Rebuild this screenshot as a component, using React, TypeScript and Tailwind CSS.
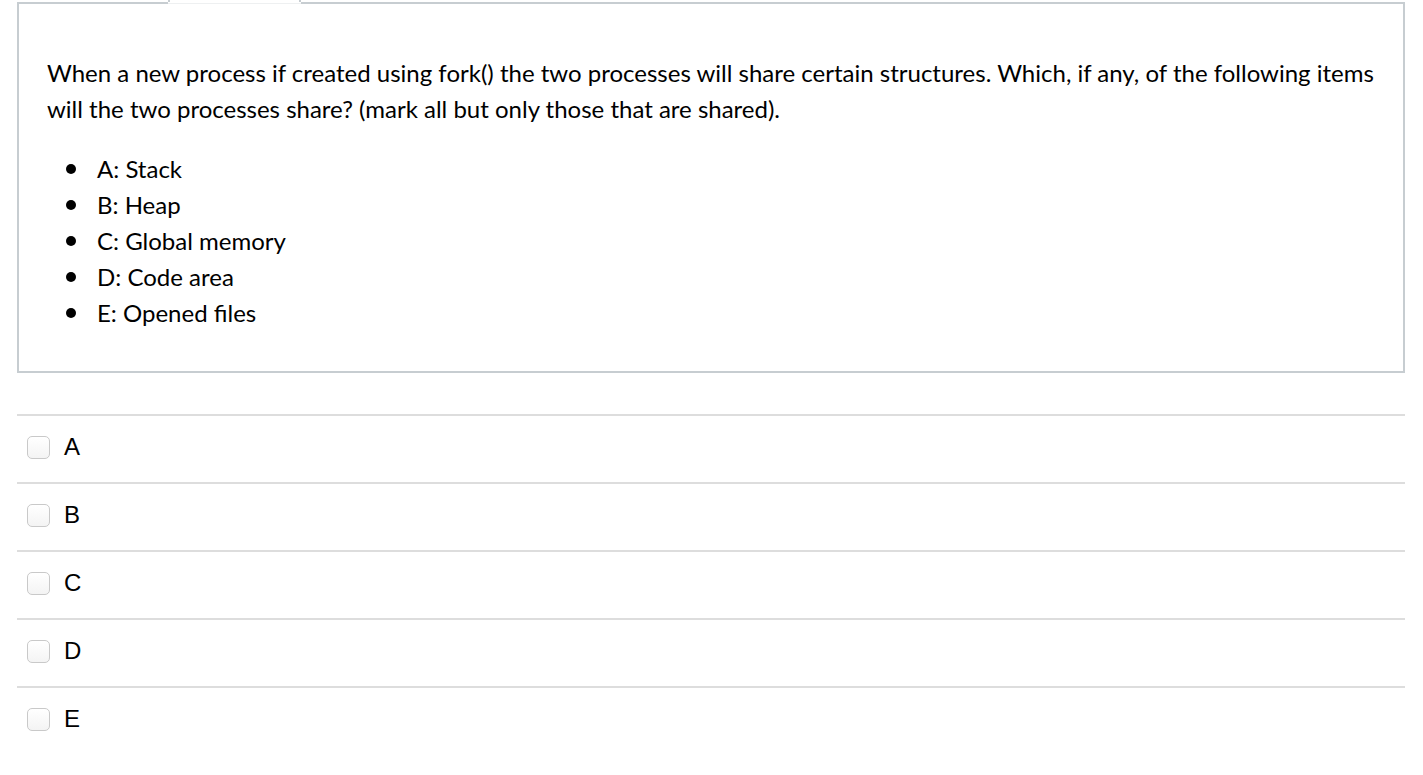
import React from 'react'

const items = ['A: Stack', 'B: Heap', 'C: Global memory', 'D: Code area', 'E: Opened files']
const answers = ['A', 'B', 'C', 'D', 'E']

export default function App() {
  return (
    <div className="min-h-screen bg-white font-['Lato','Noto_Sans',sans-serif] text-[#2d3b45]">
      <div className="ml-[17px] w-[1388px]">
        {/* tab edge */}
        <div className="flex h-[2px]">
          <div className="w-[151px]" />
          <div className="w-[133px] border-x-2 border-[#c7cdd1]" />
        </div>

        {/* question box */}
        <div className="border-x-2 border-b-2 border-[#c7cdd1]">
          <div className="-mx-[2px] flex h-[2px]">
            <div className="w-[151px] bg-[#c7cdd1]" />
            <div className="w-[133px] border-b border-[#eef0f1]" />
            <div className="flex-1 bg-[#c7cdd1]" />
          </div>
          <div className="px-[28px] pt-[51px] pb-[40px] text-[24px] leading-[36px] text-black">
            <p>
              When a new process if created using fork() the two processes will share certain structures. Which, if any, of the following items will the two processes share? (mark all but only those that are shared).
            </p>
            <ul className="mt-[24px]">
              {items.map((it) => (
                <li key={it} className="flex items-center">
                  <span className="ml-[19px] mr-[21px] h-[10px] w-[10px] rounded-full bg-black" />
                  <span>{it}</span>
                </li>
              ))}
            </ul>
          </div>
        </div>

        {/* answers */}
        <div className="mt-[41px]">
          {answers.map((a) => (
            <div key={a} className="flex h-[68px] items-center border-t-2 border-[#dddddd] pb-[4px]">
              <div className="ml-[10px] h-[23px] w-[23px] rounded-[5px] border border-[#c9c9c9] bg-gradient-to-b from-white to-[#f4f4f4]" />
              <span className="ml-[14px] font-['Liberation_Sans',Arial,sans-serif] text-[24px] text-black">{a}</span>
            </div>
          ))}
        </div>
      </div>
    </div>
  )
}
